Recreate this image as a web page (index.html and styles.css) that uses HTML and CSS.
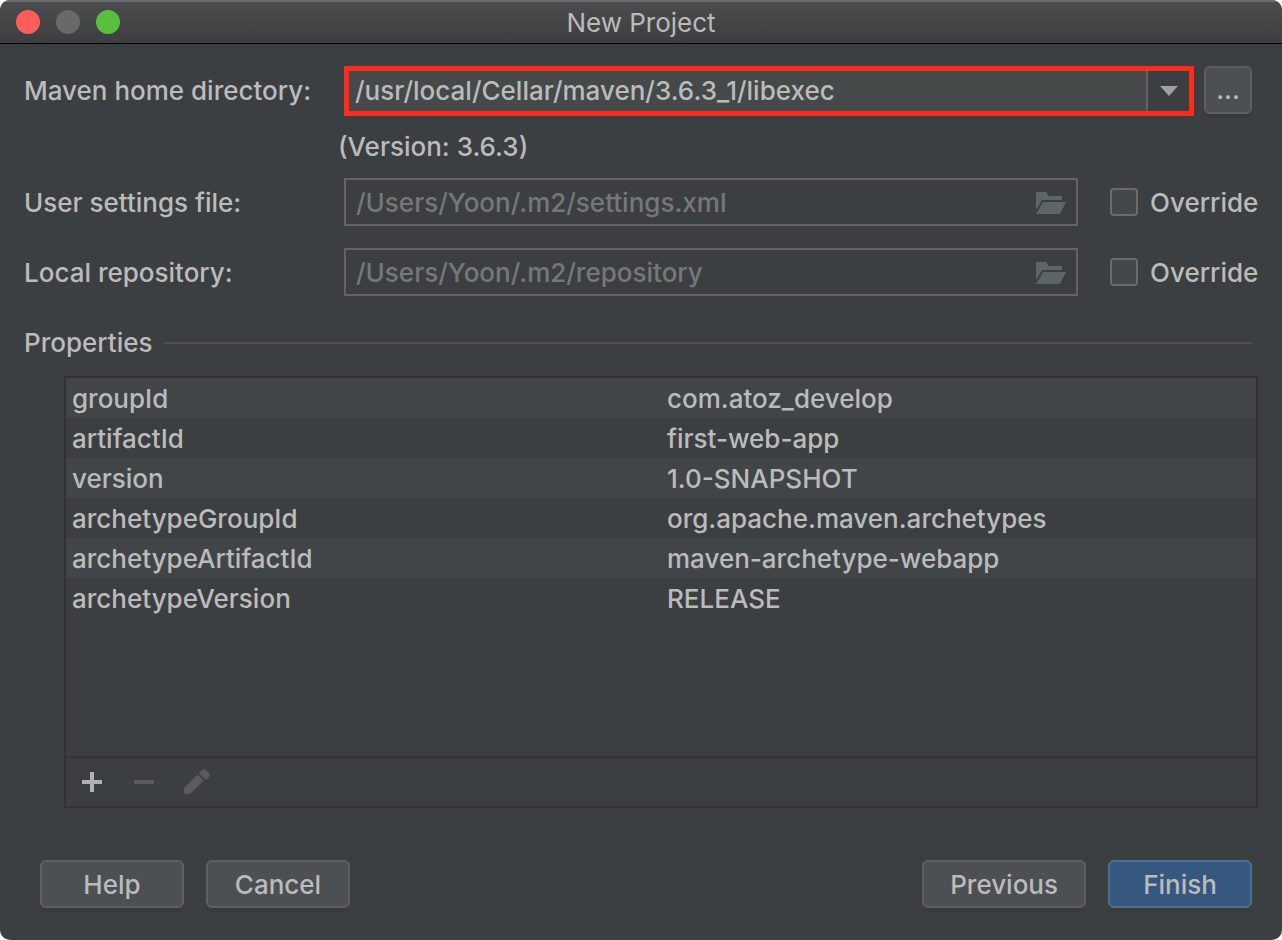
FILE: index.html
```html
<!DOCTYPE html>
<html lang="en">
<head>
	<meta charset="UTF-8">
	<title>New Project</title>
	<link rel="stylesheet" href="styles.css">
</head>
<body>
	<div class="window">
		<header class="titlebar">
			<div class="lights">
				<span class="light close"></span>
				<span class="light minimize"></span>
				<span class="light zoom"></span>
			</div>
			<h1>New Project</h1>
		</header>
		<main>
			<div class="row homeRow">
				<label class="caption" for="selHome">Maven home directory:</label>
				<div class="combo">
					<select id="selHome">
						<option>/usr/local/Cellar/maven/3.6.3_1/libexec</option>
					</select>
					<span class="arrow">
						<svg width="18" height="10" viewBox="0 0 18 10"><path d="M0 0h18L9 10z" fill="#9da2a8"/></svg>
					</span>
				</div>
				<button type="button" class="browse" aria-label="Browse">...</button>
			</div>
			<p class="version">(Version: 3.6.3)</p>
			<div class="row">
				<label class="caption" for="txtSettings">User settings file:</label>
				<div class="pathField">
					<input type="text" id="txtSettings" value="/Users/Yoon/.m2/settings.xml" disabled>
					<svg width="30" height="22" viewBox="0 0 30 22" fill="#5d6569"><path d="M0 0h10l3 4h13v4H6L0 18z"/><path d="M7 10h23l-6 12H0z"/></svg>
				</div>
				<label class="override"><input type="checkbox"><span>Override</span></label>
			</div>
			<div class="row">
				<label class="caption" for="txtRepository">Local repository:</label>
				<div class="pathField">
					<input type="text" id="txtRepository" value="/Users/Yoon/.m2/repository" disabled>
					<svg width="30" height="22" viewBox="0 0 30 22" fill="#5d6569"><path d="M0 0h10l3 4h13v4H6L0 18z"/><path d="M7 10h23l-6 12H0z"/></svg>
				</div>
				<label class="override"><input type="checkbox"><span>Override</span></label>
			</div>
			<h2>Properties</h2>
			<section class="panel">
				<div class="tableArea">
					<table>
						<tbody>
							<tr><td>groupId</td><td>com.atoz_develop</td></tr>
							<tr><td>artifactId</td><td>first-web-app</td></tr>
							<tr><td>version</td><td>1.0-SNAPSHOT</td></tr>
							<tr><td>archetypeGroupId</td><td>org.apache.maven.archetypes</td></tr>
							<tr><td>archetypeArtifactId</td><td>maven-archetype-webapp</td></tr>
							<tr><td>archetypeVersion</td><td>RELEASE</td></tr>
						</tbody>
					</table>
				</div>
				<div class="toolbar">
					<button type="button" aria-label="Add">
						<svg width="28" height="28" viewBox="0 0 28 28" fill="#afb1b3"><path d="M12 4h4v8h8v4h-8v8h-4v-8H4v-4h8z"/></svg>
					</button>
					<button type="button" aria-label="Remove" disabled>
						<svg width="28" height="28" viewBox="0 0 28 28" fill="#5a5b5c"><path d="M4 12h20v4H4z"/></svg>
					</button>
					<button type="button" aria-label="Edit" disabled>
						<svg width="28" height="28" viewBox="0 0 28 28" fill="#5a5b5c"><path d="M2 20L15.500 6.500l6.500 6L8 26H2z"/><path d="M17 5l3-3c1-1 3-1 4 0l3 3c1 1 1 3 0 4l-3 3z"/></svg>
					</button>
				</div>
			</section>
		</main>
		<footer>
			<button type="button" class="btn">Help</button>
			<button type="button" class="btn">Cancel</button>
			<button type="button" class="btn previous">Previous</button>
			<button type="button" class="btn primary">Finish</button>
		</footer>
	</div>
</body>
</html>
```
FILE: styles.css
```css
* {
	box-sizing: border-box;
	margin: 0;
}
body {
	background-color: #fff;
	color: #bbb;
	font-family: Inter, "Liberation Sans", sans-serif;
	font-size: 26px;
	font-weight: 500;
	line-height: 32px;
}
button, input, select {
	font: inherit;
	color: inherit;
}
.window {
	display: flex;
	flex-direction: column;
	min-height: 100vh;
	background-color: #3c3f41;
	border-radius: 10px;
	overflow: hidden;
}

/* title bar */
.titlebar {
	display: grid;
	grid-template-columns: 1fr auto 1fr;
	align-items: center;
	height: 44px;
	padding: 0 16px 1px;
	background: linear-gradient(#4b4c4e, #3d3e40);
	border-top: 2px solid #6a6b6d;
	border-bottom: 1px solid #000;
}
.titlebar h1 {
	padding-top: 2px;
	font-size: 26px;
	font-weight: normal;
}
.lights {
	display: flex;
	gap: 16px;
}
.light {
	width: 24px;
	height: 24px;
	border-radius: 50%;
}
.close {
	background-color: #ff5d58;
}
.minimize {
	background-color: #68696b;
}
.zoom {
	background-color: #58c03b;
}

/* form */
main {
	display: flex;
	flex-direction: column;
	flex: 1;
	padding: 22px 24px 0;
}
.row {
	display: flex;
	align-items: center;
	height: 48px;
}
.row + .row {
	margin-top: 22px;
}
.homeRow {
	padding-right: 6px;
}
.caption {
	width: 320px;
	padding-top: 2px;
}
.combo {
	display: grid;
	grid-template-columns: 1fr 43px;
	flex: 1;
	height: 50px;
	margin-top: 2px;
	border: 5px solid #fc2b1c;
	background-color: #45494a;
}
.combo select {
	grid-area: 1 / 1 / 2 / 3;
	appearance: none;
	min-width: 0;
	padding: 0 48px 0 6px;
	border: 0;
	background: none;
}
.arrow {
	grid-area: 1 / 2;
	display: flex;
	align-items: center;
	justify-content: center;
	background-color: #3c3f41;
	border-left: 2px solid #646464;
	pointer-events: none;
}
.browse, .btn {
	height: 48px;
	padding: 0;
	border: 2px solid #5e6060;
	border-radius: 6px;
	background-color: #4c5052;
	box-shadow: 0 4px 0 #383a3b;
}
.browse {
	width: 48px;
	margin-left: 10px;
}
.version {
	padding: 17px 0 15px 314px;
}
.pathField {
	display: flex;
	align-items: center;
	flex: 1;
	height: 48px;
	padding: 2px 10px 0;
	border: 2px solid #646464;
}
.pathField input {
	flex: 1;
	min-width: 0;
	padding: 0;
	border: 0;
	background: none;
	color: #777;
}
.override {
	display: flex;
	align-items: center;
	gap: 12px;
	width: 148px;
	margin-left: 32px;
}
.override span {
	padding-top: 2px;
}
.override input {
	appearance: none;
	flex: none;
	width: 28px;
	height: 28px;
	border: 2px solid #6b6b6b;
	border-radius: 4px;
	background-color: #43494a;
}

/* properties */
h2 {
	display: flex;
	align-items: center;
	gap: 12px;
	margin: 31px 6px 17px 0;
	font-size: 26px;
	font-weight: 500;
}
h2::after {
	content: "";
	flex: 1;
	height: 2px;
	background-color: #515151;
}
.panel {
	display: flex;
	flex-direction: column;
	flex: 1;
	margin-left: 40px;
	border: 2px solid #323232;
}
.tableArea {
	flex: 1;
}
table {
	width: 100%;
	table-layout: fixed;
	border-collapse: collapse;
}
td {
	height: 40px;
	padding: 2px 6px 0;
}
tr:nth-child(odd) {
	background-color: #414547;
}
.toolbar {
	display: flex;
	align-items: center;
	gap: 24px;
	height: 50px;
	padding: 0 12px;
	border-top: 2px solid #323232;
}
.toolbar button {
	display: flex;
	padding: 0;
	border: 0;
	background: none;
}

/* buttons */
footer {
	display: flex;
	gap: 22px;
	padding: 52px 30px 32px 40px;
}
.btn {
	min-width: 144px;
	padding: 2px 26px 0;
}
.previous {
	margin-left: auto;
}
.primary {
	border-color: #4c708c;
	background-color: #365880;
}
```
